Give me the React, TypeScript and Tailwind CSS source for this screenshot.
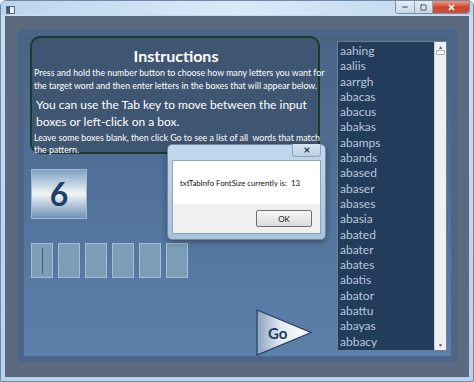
import { X, Minus, Square } from 'lucide-react';

const words = [
  'aahing', 'aaliis', 'aarrgh', 'abacas', 'abacus', 'abakas', 'abamps', 'abands', 'abased', 'abaser',
  'abases', 'abasia', 'abated', 'abater', 'abates', 'abatis', 'abator', 'abattu', 'abayas', 'abbacy',
];

export default function App() {
  return (
    <div
      className="relative w-[474px] h-[382px] overflow-hidden flex flex-col bg-gradient-to-b from-[#c9def3] to-[#b8d2ec] border border-[#6f8aa6] rounded-t-[6px]"
      style={{ fontFamily: 'Lato, "Open Sans", sans-serif' }}
    >
      {/* Title bar */}
      <div className="h-[18px] flex items-start justify-between pl-[5px] bg-gradient-to-r from-[#bcd5ee] via-[#dbeaf8] to-[#bcd5ee]">
        <div className="mt-[5px] w-[9px] h-[8px] border border-[#5a6a7a] bg-[#e8eef4] flex">
          <div className="w-[3px] h-full bg-[#4a5a6a]" />
        </div>
        <div className="flex h-[13px] mr-[3px] rounded-b-[4px] overflow-hidden border border-t-0 border-[#7a8ea4]">
          <div className="w-[19px] flex items-center justify-center bg-gradient-to-b from-[#e6eef7] to-[#c7d6e6] border-r border-[#8fa3b8]">
            <Minus className="w-[8px] h-[8px] text-[#3a4a5a]" strokeWidth={3} />
          </div>
          <div className="w-[18px] flex items-center justify-center bg-gradient-to-b from-[#e6eef7] to-[#c7d6e6] border-r border-[#8fa3b8]">
            <Square className="w-[7px] h-[7px] text-[#3a4a5a]" strokeWidth={3} />
          </div>
          <div className="w-[36px] flex items-center justify-center bg-gradient-to-b from-[#e99a8a] via-[#d0452c] to-[#c8503a]">
            <X className="w-[9px] h-[9px] text-white" strokeWidth={4} />
          </div>
        </div>
      </div>

      {/* Client area */}
      <div className="flex-1 mx-[4px] mb-[4px] mt-px bg-[#5c6a7f] pt-[13px] pl-[13px] pr-[12px] pb-[15px] flex">
        <div className="flex-1 border-[6px] border-[#4b6689] rounded-[4px] bg-gradient-to-b from-[#4a6383] via-[#52729a] to-[#5b80aa] flex pl-[6px] pt-px">
          {/* Left column */}
          <div className="w-[290px] flex flex-col">
            <div className="h-[118px] border-2 border-[#1c3a2c] rounded-[10px] bg-[#3f5673] pl-[2px] text-white whitespace-nowrap">
              <div className="text-center font-bold text-[16px] leading-[18px] mt-[9px]">Instructions</div>
              <p className="text-[8.8px] leading-[13px] mt-px">
                Press and hold the number button to choose how many letters you want for
                <br />
                the target word and then enter letters in the boxes that will appear below.
              </p>
              <p className="text-[12px] leading-[17px] mt-[4px] pl-[2px]">
                You can use the Tab key to move between the input
                <br />
                boxes or left-click on a box.
              </p>
              <p className="text-[8.8px] leading-[12px] mt-[2px]">
                Leave some boxes blank, then click Go to see a list of all&nbsp; words that match
                <br />
                the pattern.
              </p>
            </div>

            <div className="mt-[15px] ml-px w-[56px] h-[50px] border border-[#9fb9cf] bg-gradient-to-b from-[#7fa2c0] via-[#f2f5f8] to-[#6e92b4] flex items-center justify-center">
              <span className="text-[#1e3f66] font-bold text-[32px] leading-none">6</span>
            </div>

            <div className="mt-[24px] ml-px flex gap-[5px]">
              {[0, 1, 2, 3, 4, 5].map((i) => (
                <div key={i} className="w-[22px] h-[35px] bg-[#7c9db8] border border-[#a3c0d6] flex items-center justify-center">
                  {i === 0 && <div className="w-px h-[26px] bg-[#4a5a6a]" />}
                </div>
              ))}
            </div>

            <div className="mt-[31px] flex justify-end pr-[8px]">
              <div className="relative w-[56px] h-[47px]">
                <svg width="56" height="47" viewBox="0 0 56 47" className="absolute inset-0">
                  <defs>
                    <linearGradient id="gog" x1="0" y1="0" x2="1" y2="0">
                      <stop offset="0" stopColor="#8aa3bd" />
                      <stop offset="0.45" stopColor="#e6ecf2" />
                      <stop offset="1" stopColor="#ffffff" />
                    </linearGradient>
                  </defs>
                  <polygon points="1,1 55,23.5 1,46" fill="url(#gog)" stroke="#24406a" strokeWidth="1.2" />
                </svg>
                <span className="absolute left-[12px] top-[15px] text-[#1e3a62] font-bold text-[15px] leading-[18px]">Go</span>
              </div>
            </div>
          </div>

          {/* Word list */}
          <div className="ml-[17px] mt-[5px] w-[110px] h-[310px] border border-[#6d7f93] bg-[#233c5c] flex">
            <div className="flex-1 pl-[2px] pt-px overflow-hidden">
              {words.map((w) => (
                <div key={w} className="text-[12px] leading-[15.3px] text-[#b7c8dc]">{w}</div>
              ))}
            </div>
            <div className="w-[12px] bg-[#eef0f2] flex flex-col items-center justify-between border-l border-[#d0d4d8] py-[2px]">
              <div className="flex flex-col items-center">
                <span className="text-[5px] leading-[6px] text-[#555]">▲</span>
                <div className="w-[9px] h-[5px] border border-[#a8b0b8] bg-[#f8f8f8] rounded-[1px]" />
              </div>
              <span className="text-[5px] leading-[6px] text-[#555]">▼</span>
            </div>
          </div>
        </div>
      </div>

      {/* Message dialog */}
      <div className="absolute left-[166px] top-[143px] w-[159px] h-[96px] border border-[#6f8aa6] rounded-[5px] bg-gradient-to-b from-[#c2d8ee] to-[#a9c3dd] flex flex-col px-[4px] pb-[5px] shadow-[0_2px_6px_rgba(0,0,0,0.35)]">
        <div className="h-[15px] flex justify-end">
          <div className="mt-[-1px] w-[29px] h-[13px] rounded-b-[3px] border border-t-0 border-[#8ea4bb] bg-gradient-to-b from-[#d6e4f2] to-[#bcd0e4] flex items-center justify-center">
            <X className="w-[8px] h-[8px] text-[#3a4654]" strokeWidth={3.5} />
          </div>
        </div>
        <div className="flex-1 border border-[#8ea4bb] flex flex-col bg-[#f0f0f0]">
          <div className="h-[43px] bg-white pl-[7px] pt-[16px] text-[7.8px] leading-[12px] text-[#111] whitespace-nowrap">
            txtTabInfo FontSize currently is:&nbsp; 13
          </div>
          <div className="flex-1 flex justify-end items-center pr-[8px]">
            <div className="w-[56px] h-[17px] border border-[#707070] rounded-[2px] bg-gradient-to-b from-[#f6f6f6] to-[#dcdcdc] flex items-center justify-center text-[8px] text-[#111]">
              OK
            </div>
          </div>
        </div>
      </div>
    </div>
  );
}
